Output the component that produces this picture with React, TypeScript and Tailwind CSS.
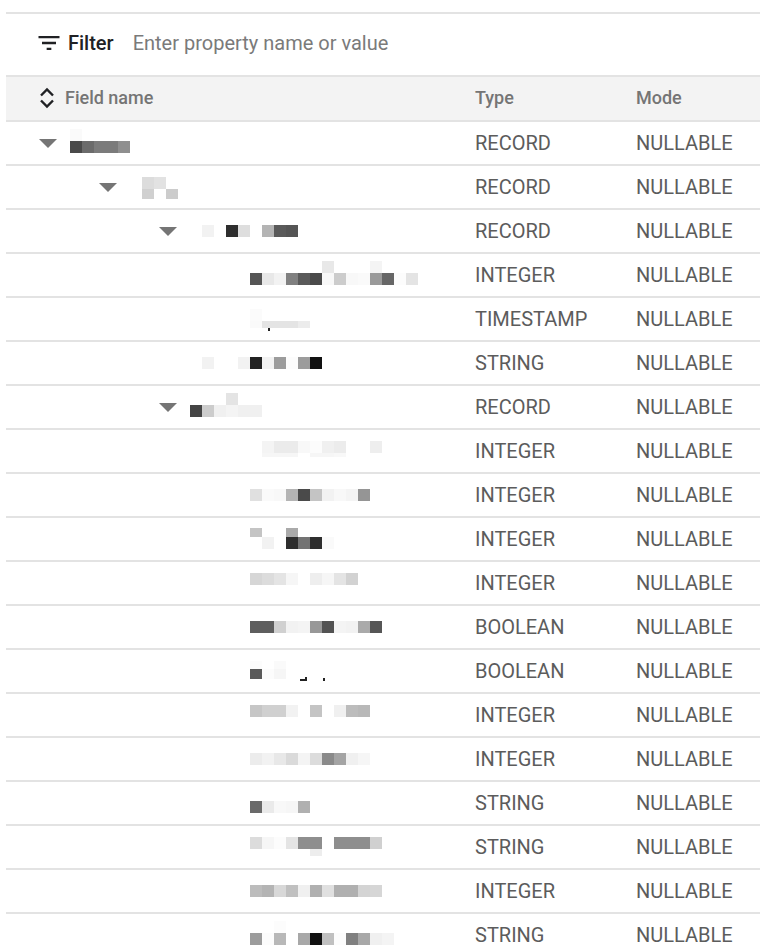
import React from "react";

type Cell = [number, number, string, number?];

type Row = {
  level: number;
  expanded?: boolean;
  type: string;
  cells: Cell[];
  extra?: [number, number, number, number, string][];
};

// mosaic cells are [x, y, colour, height] in page coordinates (12px grid)
const rows: Row[] = [
  { level: 0, expanded: true, type: "RECORD", cells: [[70, 129, "#fafafa"], [70, 141, "#4a4a4a"], [82, 141, "#6b6b6b"], [94, 141, "#7b7b7b"], [106, 141, "#7b7b7b"], [118, 141, "#8f8f8f"]] },
  { level: 1, expanded: true, type: "RECORD", cells: [[142, 177, "#dcdcdc"], [154, 177, "#e2e2e2"], [142, 189, "#d0d0d0", 10], [166, 189, "#cccccc", 10]] },
  { level: 2, expanded: true, type: "RECORD", cells: [[202, 225, "#f2f2f2"], [226, 225, "#2e2e2e"], [238, 225, "#dedede"], [262, 225, "#b4b4b4"], [274, 225, "#5a5a5a"], [286, 225, "#555555"]] },
  { level: 3, type: "INTEGER", cells: [[322, 261, "#e8e8e8"], [370, 261, "#f4f4f4"], [250, 273, "#555555"], [262, 273, "#e8e8e8"], [274, 273, "#f2f2f2"], [286, 273, "#808080"], [298, 273, "#5a5a5a"], [310, 273, "#4a4a4a"], [322, 273, "#f8f8f8"], [334, 273, "#cccccc"], [346, 273, "#f8f8f8"], [358, 273, "#fafafa"], [370, 273, "#9a9a9a"], [382, 273, "#666666"], [394, 273, "#fcfcfc"], [406, 273, "#e4e4e4"]] },
  { level: 3, type: "TIMESTAMP", cells: [[250, 309, "#fbfbfb"], [250, 321, "#fafafa", 7], [262, 321, "#e4e4e4", 7], [274, 321, "#e4e4e4", 7], [286, 321, "#e4e4e4", 7], [298, 321, "#ececec", 7]], extra: [[268, 328, 2, 3, "#222222"]] },
  { level: 2, type: "STRING", cells: [[202, 357, "#f2f2f2"], [238, 357, "#f2f2f2"], [250, 357, "#222222"], [262, 357, "#f2f2f2"], [274, 357, "#9c9c9c"], [286, 357, "#fcfcfc"], [298, 357, "#9c9c9c"], [310, 357, "#111111"]] },
  { level: 2, expanded: true, type: "RECORD", cells: [[226, 393, "#e4e4e4"], [190, 405, "#444444"], [202, 405, "#cccccc"], [214, 405, "#f0f0f0"], [226, 405, "#f4f4f4"], [238, 405, "#f0f0f0"], [250, 405, "#f0f0f0"]] },
  { level: 3, type: "INTEGER", cells: [[262, 441, "#f4f4f4"], [274, 441, "#ebebeb"], [286, 441, "#ebebeb"], [298, 441, "#f8f8f8"], [310, 441, "#fcfcfc"], [322, 441, "#f0f0f0"], [334, 441, "#ececec"], [370, 441, "#eeeeee"], [262, 453, "#f6f6f6", 4], [274, 453, "#f6f6f6", 4], [286, 453, "#f6f6f6", 4], [310, 453, "#f6f6f6", 4], [322, 453, "#f6f6f6", 4], [334, 453, "#f8f8f8", 4]] },
  { level: 3, type: "INTEGER", cells: [[250, 489, "#e0e0e0"], [262, 489, "#fafafa"], [274, 489, "#f8f8f8"], [286, 489, "#b4b4b4"], [298, 489, "#4a4a4a"], [310, 489, "#c4c4c4"], [322, 489, "#f2f2f2"], [334, 489, "#f8f8f8"], [346, 489, "#f4f4f4"], [358, 489, "#959595"]] },
  { level: 3, type: "INTEGER", cells: [[250, 528, "#c4c4c4", 9], [286, 528, "#aaaaaa", 9], [262, 537, "#f2f2f2"], [286, 537, "#2e2e2e"], [298, 537, "#737373"], [310, 537, "#2e2e2e"], [322, 537, "#fafafa"]] },
  { level: 3, type: "INTEGER", cells: [[250, 573, "#d6d6d6"], [262, 573, "#dcdcdc"], [274, 573, "#e4e4e4"], [286, 573, "#f6f6f6"], [310, 573, "#eeeeee"], [322, 573, "#f6f6f6"], [334, 573, "#e4e4e4"], [346, 573, "#d2d2d2"]] },
  { level: 3, type: "BOOLEAN", cells: [[250, 621, "#5e5e5e"], [262, 621, "#5e5e5e"], [274, 621, "#d0d0d0"], [286, 621, "#f2f2f2"], [298, 621, "#f4f4f4"], [310, 621, "#989898"], [322, 621, "#525252"], [334, 621, "#f4f4f4"], [346, 621, "#f2f2f2"], [358, 621, "#aaaaaa"], [370, 621, "#565656"]] },
  { level: 3, type: "BOOLEAN", cells: [[250, 661, "#fcfcfc", 8], [274, 661, "#fafafa", 8], [250, 669, "#5a5a5a", 10], [262, 669, "#fcfcfc", 10], [274, 669, "#f6f6f6", 10]], extra: [[300, 679, 7, 2, "#222222"], [305, 677, 2, 3, "#222222"], [323, 678, 2, 3, "#222222"]] },
  { level: 3, type: "INTEGER", cells: [[250, 705, "#c6c6c6"], [262, 705, "#d0d0d0"], [274, 705, "#d0d0d0"], [286, 705, "#f2f2f2"], [310, 705, "#c4c4c4"], [334, 705, "#f0f0f0"], [346, 705, "#bcbcbc"], [358, 705, "#b8b8b8"]] },
  { level: 3, type: "INTEGER", cells: [[250, 753, "#ececec"], [262, 753, "#f2f2f2"], [274, 753, "#e8e8e8"], [286, 753, "#dadada"], [298, 753, "#f4f4f4"], [310, 753, "#dcdcdc"], [322, 753, "#8a8a8a"], [334, 753, "#a4a4a4"], [346, 753, "#f0f0f0"], [358, 753, "#f6f6f6"]] },
  { level: 3, type: "STRING", cells: [[250, 801, "#6a6a6a"], [262, 801, "#eaeaea"], [274, 801, "#f8f8f8"], [286, 801, "#f6f6f6"], [298, 801, "#b0b0b0"]] },
  { level: 3, type: "STRING", cells: [[250, 837, "#dcdcdc"], [262, 837, "#f6f6f6"], [274, 837, "#fcfcfc"], [286, 837, "#e4e4e4"], [298, 837, "#8e8e8e"], [310, 837, "#8e8e8e"], [334, 837, "#8e8e8e"], [346, 837, "#8e8e8e"], [358, 837, "#8e8e8e"], [370, 837, "#d0d0d0"], [310, 849, "#ededed", 7]] },
  { level: 3, type: "INTEGER", cells: [[250, 885, "#bcbcbc"], [262, 885, "#b4b4b4"], [274, 885, "#d8d8d8"], [286, 885, "#c0c0c0"], [298, 885, "#f0f0f0"], [310, 885, "#b0b0b0"], [322, 885, "#e0e0e0"], [334, 885, "#b0b0b0"], [346, 885, "#b0b0b0"], [358, 885, "#d4d4d4"], [370, 885, "#d6d6d6"]] },
  { level: 3, type: "STRING", cells: [[274, 921, "#fcfcfc"], [250, 933, "#9c9c9c"], [262, 933, "#fcfcfc"], [274, 933, "#b8b8b8"], [298, 933, "#a8a8a8"], [310, 933, "#111111"], [322, 933, "#c0c0c0"], [334, 933, "#fcfcfc"], [346, 933, "#808080"], [358, 933, "#a8a8a8"], [370, 933, "#f0f0f0"], [382, 933, "#f4f4f4"]] },
];

const ROW_TOP = 122;
const ROW_H = 44;

function FilterIcon() {
  return (
    <svg width="28" height="28" viewBox="0 0 24 24" fill="#202124">
      <path d="M10 18h4v-2h-4v2zM3 6v2h18V6H3zm3 7h12v-2H6v2z" />
    </svg>
  );
}

function SortIcon() {
  return (
    <svg width="16" height="24" viewBox="0 0 16 24" fill="none" stroke="#202124" strokeWidth="2.4">
      <path d="M2 9.5 8 3.5l6 6" />
      <path d="M2 14.5l6 6 6-6" />
    </svg>
  );
}

function Caret() {
  return (
    <svg width="18" height="9" viewBox="0 0 18 9" className="shrink-0">
      <path d="M0 0h18L9 9z" fill="#757575" />
    </svg>
  );
}

function Mosaic({ row, index }: { row: Row; index: number }) {
  const top = ROW_TOP + index * ROW_H;
  const left = 70 + row.level * 60;
  return (
    <svg width={440 - left} height={ROW_H - 2} className="shrink-0">
      {row.cells.map(([x, y, c, h], i) => (
        <rect key={i} x={x - left} y={y - top} width={12} height={h ?? 12} fill={c} />
      ))}
      {row.extra?.map(([x, y, w, h, c], i) => (
        <rect key={"e" + i} x={x - left} y={y - top} width={w} height={h} fill={c} />
      ))}
    </svg>
  );
}

export default function App() {
  return (
    <div className="w-[760px] h-[946px] overflow-hidden bg-white pl-[6px] pt-[12px]" style={{ fontFamily: "Roboto, 'Noto Sans', sans-serif" }}>
      <div className="border-t-2 border-[#e3e3e3]">
        {/* filter bar */}
        <div className="h-[61px] flex items-center pl-[29px] pb-[3px]">
          <FilterIcon />
          <span className="ml-[5px] text-[20px] font-medium text-[#202124]">Filter</span>
          <span className="ml-[19px] text-[20px] text-[#7a7a7a]">Enter property name or value</span>
        </div>

        {/* header */}
        <div className="flex h-[47px] items-center bg-[#f3f3f3] border-y-2 border-[#e3e3e3] text-[18px] font-medium text-[#757575] pb-[2px]">
          <div className="w-[453px] flex items-center pl-[33px]">
            <SortIcon />
            <span className="ml-[10px]">Field name</span>
          </div>
          <div className="w-[161px] pl-4">Type</div>
          <div className="pl-4">Mode</div>
        </div>

        {/* rows */}
        {rows.map((row, i) => (
          <div key={i} className="flex h-[44px] items-center border-b-2 border-[#e3e3e3] text-[20px] text-[#5c5c5c]">
            <div className="w-[453px] h-full flex items-center" style={{ paddingLeft: 33 + row.level * 60 }}>
              {row.expanded ? <Caret /> : <div className="w-[18px] shrink-0" />}
              <div className="w-[13px] shrink-0" />
              <Mosaic row={row} index={i} />
            </div>
            <div className="w-[161px] pl-4 -mt-[1px]">{row.type}</div>
            <div className="pl-4 -mt-[1px]">NULLABLE</div>
          </div>
        ))}
      </div>
    </div>
  );
}
